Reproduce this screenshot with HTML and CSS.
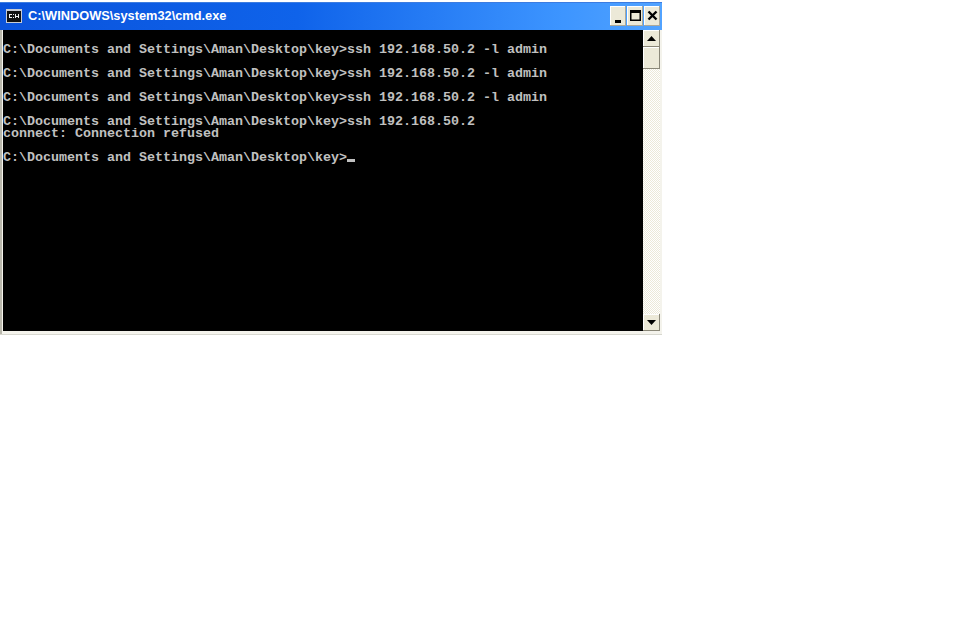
FILE: index.html
```html
<!DOCTYPE html>
<html lang="en">
<head>
<meta charset="utf-8">
<title>cmd.exe</title>
<link rel="stylesheet" href="styles.css">
</head>
<body>
<div class="window">
  <div class="titlebar">
    <svg class="appicon" width="16" height="14" viewBox="0 0 16 14">
      <rect x="0" y="0" width="16" height="14" fill="#c8ccd4"/>
      <rect x="1" y="2" width="14" height="11" fill="#111"/>
      <path d="M3 5h3v1H4v2h2v1H3zM7 5h1v1H7zM7 8h1v1H7zM9 5h1v4H9zM12 5h1v4h-1zM10 7h2v1h-2z" fill="#eee"/>
    </svg>
    <span class="title">C:\WINDOWS\system32\cmd.exe</span>
    <div class="buttons">
      <div class="btn"><svg width="15" height="17" viewBox="0 0 15 17"><rect x="4" y="13" width="6" height="3" fill="#000"/></svg></div>
      <div class="btn"><svg width="15" height="17" viewBox="0 0 15 17"><path d="M2 3h11v11H2zM3.500 6v6.500h8V6z" fill="#000" fill-rule="evenodd"/></svg></div>
      <div class="btn"><svg width="15" height="17" viewBox="0 0 15 17"><path d="M3.500 4.500l8 8M11.500 4.500l-8 8" stroke="#000" stroke-width="2.400" fill="none"/></svg></div>
    </div>
  </div>
  <div class="client">
    <div class="console">
      <div class="line">C:\Documents and Settings\Aman\Desktop\key&gt;ssh 192.168.50.2 -l admin</div>
      <div class="line"></div>
      <div class="line">C:\Documents and Settings\Aman\Desktop\key&gt;ssh 192.168.50.2 -l admin</div>
      <div class="line"></div>
      <div class="line">C:\Documents and Settings\Aman\Desktop\key&gt;ssh 192.168.50.2 -l admin</div>
      <div class="line"></div>
      <div class="line">C:\Documents and Settings\Aman\Desktop\key&gt;ssh 192.168.50.2</div>
      <div class="line">connect: Connection refused</div>
      <div class="line"></div>
      <div class="line">C:\Documents and Settings\Aman\Desktop\key&gt;<span class="cursor"></span></div>
    </div>
    <div class="scrollbar">
      <div class="sbtn"><svg width="9" height="5" viewBox="0 0 9 5"><path d="M4.500 0L9 5H0z" fill="#000"/></svg></div>
      <div class="thumb"></div>
      <div class="track"></div>
      <div class="sbtn"><svg width="9" height="5" viewBox="0 0 9 5"><path d="M0 0h9L4.500 5z" fill="#000"/></svg></div>
    </div>
  </div>
</div>
</body>
</html>
```
FILE: styles.css
```css
html, body {
  margin: 0;
  padding: 0;
  background: #fff;
}
.window {
  width: 662px;
  height: 333px;
  margin-top: 2px;
  background: #f4f3ec;
  display: flex;
  flex-direction: column;
  box-sizing: border-box;
  border-bottom: 1px solid #d8d8d0;
}
.titlebar {
  height: 28px;
  flex: none;
  display: flex;
  align-items: center;
  box-sizing: border-box;
  padding: 0 2px 2px 6px;
  background: linear-gradient(90deg, #0a53dc 0%, #0f63ea 45%, #3d95ff 85%, #52a3ff 100%);
  border-top: 1px solid #3c7ce0;
}
.appicon {
  flex: none;
  margin-right: 6px;
}
.title {
  font: bold 12.8px "Liberation Sans", Arial, sans-serif;
  color: #fff;
  white-space: nowrap;
  flex: 1;
}
.buttons {
  display: flex;
  gap: 1px;
}
.btn {
  width: 16px;
  height: 20px;
  display: flex;
  align-items: center;
  justify-content: center;
  background: #ece9d8;
  box-shadow: inset -1px -1px 0 #aca899, inset 1px 1px 0 #fff;
}
.client {
  flex: 1;
  display: flex;
  padding: 0 2px 3px 3px;
  min-height: 0;
  box-shadow: inset 2px 0 0 #b9b8ac;
}
.console {
  flex: 1;
  background: #000;
  color: #c0c0c0;
  font: bold 13.333px/12px "Liberation Mono", "Courier New", monospace;
  padding-top: 14px;
  overflow: hidden;
}
.line {
  height: 12px;
  white-space: pre;
}
.cursor {
  display: inline-block;
  width: 8px;
  height: 3px;
  background: #c0c0c0;
  vertical-align: -1px;
}
.scrollbar {
  width: 17px;
  flex: none;
  display: flex;
  flex-direction: column;
  background-color: #f3f1e7;
  background-image: repeating-conic-gradient(#ece9d8 0 25%, #fff 0 50%);
  background-size: 2px 2px;
}
.sbtn {
  height: 17px;
  flex: none;
  display: flex;
  align-items: center;
  justify-content: center;
  background: #ece9d8;
  box-shadow: inset -1px -1px 0 #8a8778, inset 1px 1px 0 #fff;
}
.thumb {
  height: 22px;
  flex: none;
  background: #ece9d8;
  box-shadow: inset -1px -1px 0 #8a8778, inset 1px 1px 0 #fff;
}
.track {
  flex: 1;
}
```
